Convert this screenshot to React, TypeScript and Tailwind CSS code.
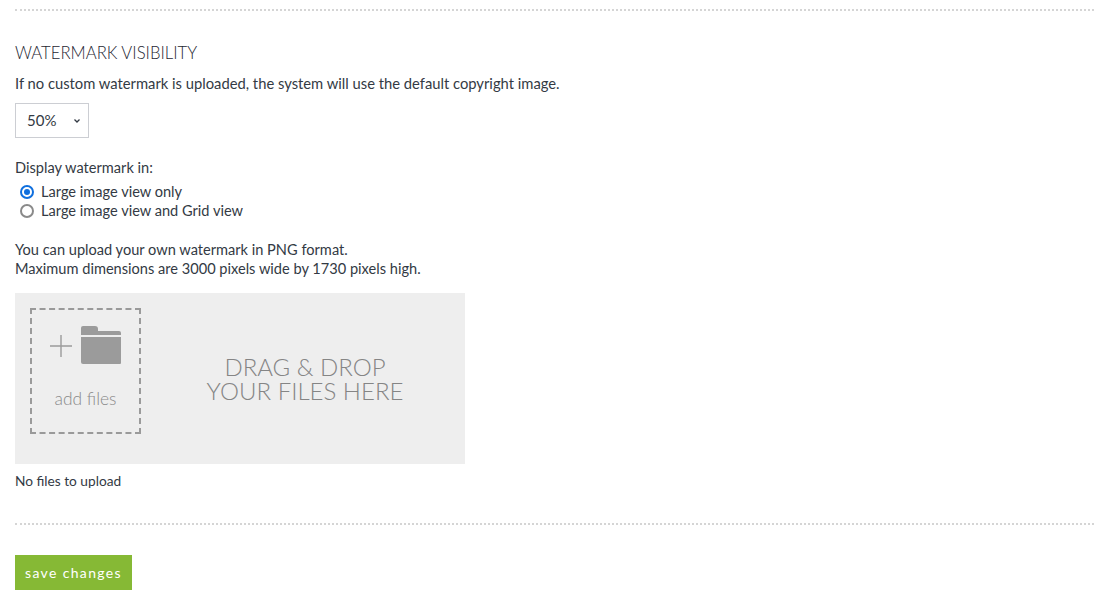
export default function App() {
  return (
    <div className="w-[1119px] h-[611px] overflow-hidden bg-white px-[15px] pr-[25px] font-['Lato',sans-serif] text-[#333a44] text-[14.6px] leading-[19px]">
      <div className="mt-[9px] border-t-2 border-dotted border-[#d5d5d5]" />
      <h2 className="mt-[31px] text-[16.7px] leading-[22px] font-light text-[#1f2733]">WATERMARK VISIBILITY</h2>
      <p className="mt-[10px] text-[14.75px]">If no custom watermark is uploaded, the system will use the default copyright image.</p>
      <div className="mt-[10px] w-[74px] h-[35px] border border-[#ccced3] flex items-center justify-between pl-[11px] pr-[6px] text-[15px]">
        <span>50%</span>
        <svg width="10" height="10" viewBox="0 0 10 10" fill="none" stroke="#333a44" strokeWidth="1.3"><path d="M2.5 3.5 5 6l2.5-2.5" /></svg>
      </div>
      <p className="mt-[20px]">Display watermark in:</p>
      <div className="mt-[5px] pl-[5px] flex flex-col">
        <label className="flex items-center gap-[7px] h-[19px]">
          <span className="w-[14px] h-[14px] rounded-full border-2 border-[#0f6fde] flex items-center justify-center"><span className="w-[6px] h-[6px] rounded-full bg-[#0f6fde]" /></span>
          Large image view only
        </label>
        <label className="flex items-center gap-[7px] h-[19px]">
          <span className="w-[14px] h-[14px] rounded-full border-2 border-[#8a8a8a]" />
          Large image view and Grid view
        </label>
      </div>
      <p className="mt-[20px]">You can upload your own watermark in PNG format.<br />Maximum dimensions are 3000 pixels wide by 1730 pixels high.</p>
      <div className="mt-[15px] w-[450px] h-[171px] bg-[#eeeeee] flex items-start pl-[15px] pt-[15px]">
        <div className="w-[111px] h-[126px] border-2 border-dashed border-[#9a9a9a] flex flex-col items-center text-[#9b9b9b]">
          <div className="mt-[15px] flex items-center gap-[8px] ml-[-1px]">
            <svg width="24" height="24" viewBox="0 0 24 24" stroke="#9b9b9b" strokeWidth="1.4" className="mt-[2px]"><path d="M12 1v22M1 12h22" /></svg>
            <svg width="40" height="40" viewBox="0 0 40 40" fill="#9b9b9b"><path d="M0 3a2 2 0 0 1 2-2h12a3 3 0 0 1 3 3v2h21a2 2 0 0 1 2 2v2H0z" /><path d="M0 12h40v26a1 1 0 0 1-1 1H2a2 2 0 0 1-2-2z" /></svg>
          </div>
          <span className="mt-[23px] text-[17.4px] leading-[22px] font-light text-[#8a8a8a]">add files</span>
        </div>
        <div className="ml-[39px] mt-[47px] w-[250px] text-center text-[24px] leading-[24px] font-light text-[#858585]">DRAG &amp; DROP<br />YOUR FILES HERE</div>
      </div>
      <p className="mt-[7px] text-[13.7px]">No files to upload</p>
      <div className="mt-[33px] border-t-2 border-dotted border-[#d5d5d5]" />
      <button className="mt-[30px] block w-[117px] h-[35px] bg-[#86b935] text-white text-[14px] tracking-[1.35px]">save changes</button>
    </div>
  );
}
